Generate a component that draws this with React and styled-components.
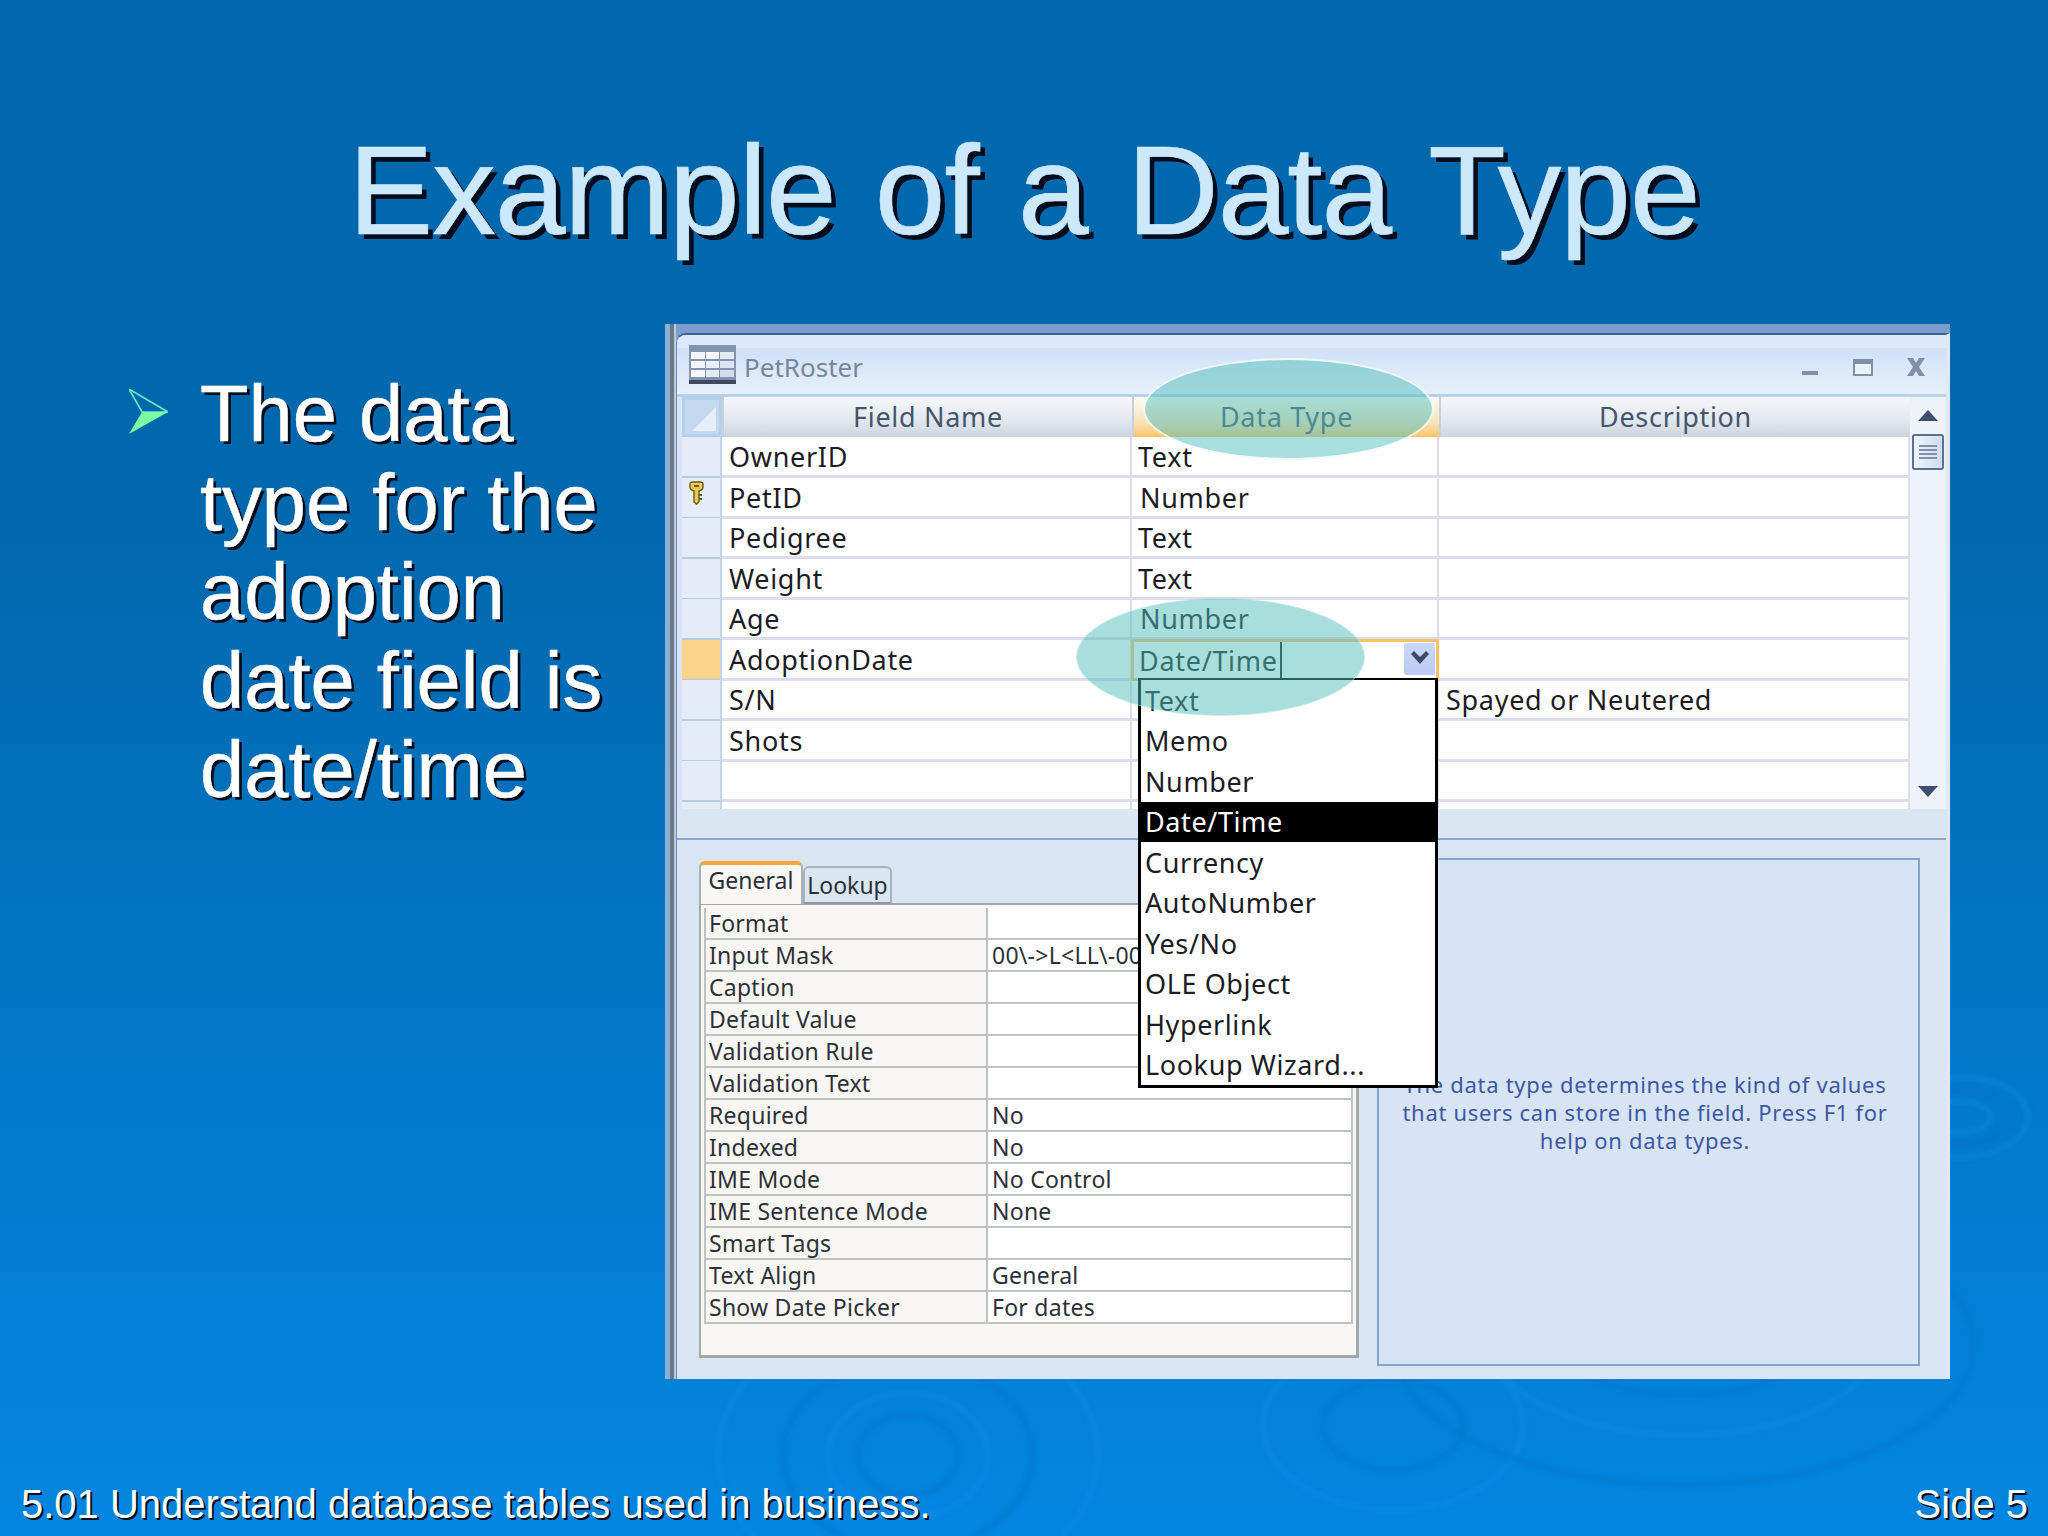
import React from "react";
import styled, { createGlobalStyle } from "styled-components";

const Global = createGlobalStyle`
  html, body { margin: 0; padding: 0; background: #0268ae; }
  * { box-sizing: border-box; }
`;

const Slide = styled.div`
  position: relative;
  width: 2048px;
  height: 1536px;
  overflow: hidden;
  display: flex;
  flex-direction: column;
  background: linear-gradient(180deg, #0268ae 0%, #0268ae 35%, #0276c6 65%, #0386e0 100%);
  font-family: "Liberation Sans", Arial, sans-serif;
`;

const Ripples = styled.svg`
  position: absolute;
  left: 0;
  top: 0;
  width: 2048px;
  height: 1536px;
  filter: blur(2px);
`;

const Title = styled.h1`
  position: relative;
  margin: 0;
  height: 324px;
  padding: 115px 0 0 0;
  font-size: 127px;
  font-weight: 400;
  line-height: 150px;
  text-align: center;
  color: #cce8fb;
  -webkit-text-stroke: 0.7px #cce8fb;
  text-shadow: 5px 5px 0 #010d1c;
  letter-spacing: -1px;
  word-spacing: 5px;
`;

const Main = styled.div`
  position: relative;
  display: flex;
  height: 1055px;
  padding-left: 129px;
`;

const BodyCol = styled.div`
  width: 536px;
  display: flex;
  gap: 32px;
  padding-top: 45px;
`;

const BulletIcon = styled.svg`
  flex: none;
  width: 39px;
  height: 45px;
  margin-top: 20px;
`;

const BodyText = styled.div`
  font-size: 79.5px;
  line-height: 89px;
  color: #fff;
  -webkit-text-stroke: 0.5px #fff;
  text-shadow: 3px 3px 0 #010d1c;
`;

const Win = styled.div`
  position: relative;
  width: 1285px;
  height: 1055px;
  padding: 9px 0 0 6px;
  background: linear-gradient(90deg, #6f7780 0 4px, #b4cce8 4px 6px) no-repeat left top / 6px 100%, #7a9ecb;
  border-left: 5px solid #8ab0d8;
  font-family: "Noto Sans", sans-serif;
`;

const WinInner = styled.div`
  height: 100%;
  display: flex;
  flex-direction: column;
  background: #d9e5f3;
  border-top: 2px solid #3e5f90;
  border-left: 1px solid #6f8fb8;
  border-right: 4px solid #dce8f5;
  border-top-left-radius: 10px;
  overflow: hidden;
`;

const TitleBar = styled.div`
  flex: none;
  height: 62px;
  display: flex;
  align-items: center;
  padding: 4px 19px 0 12px;
  border-bottom: 3px solid #b8d0ee;
  background: linear-gradient(180deg, #dbe9fb 0%, #dbe9fb 22%, #d0e1f6 23%, #e6f0fb 100%);
`;

const TableIcon = styled.svg`
  width: 47px;
  height: 39px;
  flex: none;
  margin-top: -4px;
`;

const WinName = styled.span`
  margin-left: 8px;
  font-size: 26px;
  color: #76879c;
  flex: 1;
`;

const WinBtn = styled.svg`
  width: 22px;
  height: 22px;
  margin-left: 31px;
`;

const GridWrap = styled.div`
  flex: none;
  display: flex;
  height: 412px;
  padding-left: 5px;
`;

const Grid = styled.div`
  width: 1228px;
  height: 412px;
  overflow: hidden;
  background: #fff;
`;

const HeaderRow = styled.div`
  display: grid;
  grid-template-columns: 40px 410px 307px 471px;
  height: 40px;
`;

const Corner = styled.div`
  background: #c4d8f0;
  border: 3px solid #b5cee9;
  display: flex;
  align-items: flex-end;
  justify-content: flex-end;
`;

const CornerMark = styled.div`
  width: 0;
  height: 0;
  border-style: solid;
  border-width: 0 0 24px 24px;
  border-color: transparent transparent #e6eef8 transparent;
  margin: 0 3px 3px 0;
`;

const HeadCell = styled.div`
  display: flex;
  align-items: center;
  justify-content: center;
  padding-bottom: 2px;
  font-size: 27px;
  letter-spacing: 0.7px;
  color: #45556c;
  border-left: 2px solid #c7d0dc;
  background: ${p => p.$active
    ? "linear-gradient(180deg, #fdfbf5 0%, #f8e2b6 65%, #fec468 100%)"
    : "linear-gradient(180deg, #f6f8fb 0%, #e2e7ee 60%, #cdd4de 100%)"};
`;

const Row = styled.div`
  display: grid;
  grid-template-columns: 40px 410px 307px 471px;
  height: 40.5px;
`;

const Selector = styled.div`
  position: relative;
  background: ${p => p.$active ? "#fdd38c" : "#e4ecf8"};
  border-bottom: 2px solid #b7cbe2;
  border-right: 2px solid #c4d5ea;
`;

const KeyIcon = styled.svg`
  position: absolute;
  left: 6px;
  top: 3px;
  width: 17px;
  height: 24px;
`;

const Cell = styled.div`
  position: relative;
  display: flex;
  align-items: center;
  padding-left: ${p => p.$pad || 7}px;
  padding-top: 1px;
  font-size: 27px;
  letter-spacing: 0.7px;
  color: #1c1c24;
  white-space: nowrap;
  border-bottom: 3px solid #dcdcec;
  border-right: 2px solid #dcdcec;
`;

const ActiveCell = styled(Cell)`
  border: 3px solid #fcc26a;
  margin-left: -1px;
  margin-top: -1px;
  height: 42px;
  width: 308px;
  z-index: 1;
  background: #fff;
  padding-left: 5px;
`;

const Caret = styled.span`
  display: inline-block;
  width: 2px;
  height: 36px;
  margin-left: 2px;
  background: #10202a;
`;

const DropBtn = styled.div`
  position: absolute;
  right: 1px;
  top: 1px;
  width: 31px;
  height: 32px;
  display: flex;
  align-items: center;
  justify-content: center;
  background: linear-gradient(180deg, #c9d6f7, #bccbf3);
  border-radius: 2px;
`;

const ScrollBar = styled.div`
  width: 36px;
  height: 412px;
  display: flex;
  flex-direction: column;
  align-items: center;
  padding: 13px 0 12px;
  background: #eef3fa;
`;

const ScrollThumb = styled.div`
  width: 32px;
  height: 36px;
  margin-top: 13px;
  margin-bottom: auto;
  border: 2px solid #5f6f8c;
  border-radius: 3px;
  background: linear-gradient(90deg, #eef3fb, #cfdcef);
  display: flex;
  flex-direction: column;
  align-items: center;
  justify-content: center;
  gap: 2px;
`;

const ThumbLine = styled.div`
  width: 18px;
  height: 2px;
  background: #7f90a8;
`;

const ArrowUp = styled.div`
  width: 0;
  height: 0;
  border-style: solid;
  border-width: ${p => p.$down ? "11px 10px 0 10px" : "0 10px 11px 10px"};
  border-color: ${p => p.$down ? "#3f4f70 transparent transparent transparent" : "transparent transparent #3f4f70 transparent"};
`;

const Spacer = styled.div`
  flex: none;
  height: 31px;
  background: #dbe6f3;
  border-bottom: 2px solid #8aa8cc;
`;

const Lower = styled.div`
  flex: 1;
  display: flex;
  gap: 18px;
  padding: 18px 0 13px 22px;
  background: #d9e5f3;
`;

const PropsCol = styled.div`
  width: 660px;
  margin-bottom: 8px;
  padding-top: 2px;
  display: flex;
  flex-direction: column;
`;

const Tabs = styled.div`
  flex: none;
  display: flex;
  align-items: flex-end;
  height: 43px;
  position: relative;
  top: 1px;
`;

const Tab = styled.div`
  display: flex;
  align-items: center;
  justify-content: center;
  font-size: 23px;
  color: #2a2f38;
  border-radius: 6px 6px 0 0;
  height: ${p => p.$on ? 43 : 38}px;
  width: ${p => p.$on ? 104 : 89}px;
  background: ${p => p.$on ? "#f8f7f3" : "#dbe6f3"};
  border: 2px solid #a9b1bb;
  border-top: ${p => p.$on ? "4px solid #f5a83c" : "2px solid #a9b1bb"};
  border-bottom: ${p => p.$on ? "none" : "2px solid #8f969f"};
  padding-bottom: ${p => p.$on ? 9 : 1}px;
`;

const Panel = styled.div`
  flex: 1;
  background: #f7f6f2;
  border: 2px solid #a5a8a8;
  border-right-width: 3px;
  border-bottom-width: 3px;
  padding: 3px 3px;
`;

const PropRow = styled.div`
  display: grid;
  grid-template-columns: 284px 1fr;
  grid-template-rows: 32px;
  height: 32px;
  font-size: 23px;
  line-height: 28px;
  letter-spacing: 0.25px;
  color: #2d3038;
`;

const PropLabel = styled.div`
  display: flex;
  align-items: center;
  padding-left: 3px;
  white-space: nowrap;
  background: #f7f6f2;
  border: 2px solid #bfc2c4;
  border-width: 0 2px 2px 2px;
`;

const PropValue = styled.div`
  display: flex;
  align-items: center;
  padding-left: 4px;
  white-space: nowrap;
  overflow: hidden;
  background: #fff;
  border: 2px solid #bfc2c4;
  border-width: 0 2px 2px 0;
`;

const HelpBox = styled.div`
  width: 543px;
  border: 2px solid #86a4cc;
  display: flex;
  align-items: center;
  justify-content: center;
  padding-right: 7px;
  text-align: center;
  font-size: 22px;
  line-height: 28px;
  letter-spacing: 0.7px;
  color: #3e56a4;
  background: #d6e4f3;
`;

const DropList = styled.div`
  position: absolute;
  left: 468px;
  top: 354px;
  width: 300px;
  height: 410px;
  background: #fff;
  border: 3px solid #000;
  border-width: 2px 3px 3px 3px;
  z-index: 2;
`;

const DropItem = styled.div`
  height: 40.5px;
  display: flex;
  align-items: center;
  padding-left: 4px;
  font-size: 27px;
  letter-spacing: 0.6px;
  color: ${p => p.$sel ? "#fff" : "#1c1c24"};
  background: ${p => p.$sel ? "#000" : "transparent"};
`;

const Highlight = styled.div`
  position: absolute;
  left: ${p => p.$x}px;
  top: ${p => p.$y}px;
  width: ${p => p.$w}px;
  height: ${p => p.$h}px;
  border-radius: 50%;
  background: rgba(82, 190, 185, 0.5);
  border: ${p => p.$line ? "2px solid rgba(255,255,255,0.85)" : "1px solid rgba(255,255,255,0.35)"};
  z-index: 3;
`;

const Footer = styled.div`
  position: relative;
  margin-top: auto;
  height: 64px;
  display: flex;
  justify-content: space-between;
  align-items: center;
  padding: 0 20px 0 21px;
  font-size: 40px;
  color: #fff;
  text-shadow: 2px 2px 0 #010d1c;
`;

const rows = [
  ["OwnerID", "Text", ""],
  ["PetID", "Number", ""],
  ["Pedigree", "Text", ""],
  ["Weight", "Text", ""],
  ["Age", "Number", ""],
  ["AdoptionDate", "Date/Time", ""],
  ["S/N", "", "Spayed or Neutered"],
  ["Shots", "", ""],
  ["", "", ""],
  ["", "", ""],
];

const types = ["Text", "Memo", "Number", "Date/Time", "Currency", "AutoNumber", "Yes/No", "OLE Object", "Hyperlink", "Lookup Wizard..."];

const props = [
  ["Format", ""],
  ["Input Mask", "00\\->L<LL\\-00"],
  ["Caption", ""],
  ["Default Value", ""],
  ["Validation Rule", ""],
  ["Validation Text", ""],
  ["Required", "No"],
  ["Indexed", "No"],
  ["IME Mode", "No Control"],
  ["IME Sentence Mode", "None"],
  ["Smart Tags", ""],
  ["Text Align", "General"],
  ["Show Date Picker", "For dates"],
];

const rings = [
  [908, 1455, 50, 40], [908, 1455, 80, 62], [908, 1455, 125, 95], [908, 1455, 190, 140],
  [1393, 1425, 70, 45], [1393, 1425, 130, 85],
  [1684, 1345, 120, 50], [1684, 1345, 190, 90], [1684, 1345, 290, 140],
  [1960, 1117, 30, 16], [1960, 1117, 50, 27], [1960, 1117, 68, 40],
];

export default function App() {
  return (
    <Slide>
      <Global />
      <Ripples viewBox="0 0 2048 1536" fill="none">
        {rings.map(([cx, cy, rx, ry], i) => (
          <ellipse key={i} cx={cx} cy={cy} rx={rx} ry={ry} stroke={i % 2 ? "#0f8ce6" : "#0373c4"} strokeOpacity="0.45" strokeWidth="5" />
        ))}
      </Ripples>
      <Title>Example of a Data Type</Title>
      <Main>
        <BodyCol>
          <BulletIcon viewBox="0 0 39 45">
            <path d="M0 0 L39 23 L13 23 Z" fill="none" stroke="#5ff0c8" strokeWidth="1.6" />
            <path d="M0 45 L13 23 L39 23 Z" fill="#7dfba0" />
          </BulletIcon>
          <BodyText>The data<br />type for the<br />adoption<br />date field is<br />date/time</BodyText>
        </BodyCol>
        <Win>
          <WinInner>
            <TitleBar>
              <TableIcon viewBox="0 0 47 39">
                <rect width="47" height="39" fill="#8494ae" />
                <rect x="2" y="7" width="14" height="7" fill="#f4f7fc" />
                <rect x="17" y="7" width="13" height="7" fill="#f4f7fc" />
                <rect x="31" y="7" width="14" height="7" fill="#e4ebf6" />
                <rect x="2" y="16" width="14" height="7" fill="#f4f7fc" />
                <rect x="17" y="16" width="13" height="7" fill="#eaf0f8" />
                <rect x="31" y="16" width="14" height="7" fill="#dbe4f2" />
                <rect x="2" y="25" width="14" height="7" fill="#f4f7fc" />
                <rect x="17" y="25" width="13" height="7" fill="#e4ebf6" />
                <rect x="31" y="25" width="14" height="7" fill="#d2dcee" />
                <rect y="35" width="47" height="4" fill="#404a5e" />
              </TableIcon>
              <WinName>PetRoster</WinName>
              <WinBtn viewBox="0 0 22 22">
                <rect x="3" y="15" width="16" height="4" fill="#7f8fa8" />
              </WinBtn>
              <WinBtn viewBox="0 0 22 22">
                <rect x="2" y="4" width="18" height="15" fill="#eaf2fb" stroke="#7f8fa8" strokeWidth="2" />
                <rect x="2" y="3" width="18" height="5" fill="#7f8fa8" />
              </WinBtn>
              <WinBtn viewBox="0 0 22 22">
                <path d="M2 2h6l3 5 3-5h6l-6 9 6 9h-6l-3-5-3 5H2l6-9z" fill="#7f90a8" />
              </WinBtn>
            </TitleBar>
            <GridWrap>
              <Grid>
                <HeaderRow>
                  <Corner><CornerMark /></Corner>
                  <HeadCell>Field Name</HeadCell>
                  <HeadCell $active>Data Type</HeadCell>
                  <HeadCell>Description</HeadCell>
                </HeaderRow>
                {rows.map((r, i) => (
                  <Row key={i}>
                    <Selector $active={i === 5}>
                      {i === 1 && (
                        <KeyIcon viewBox="0 0 17 24">
                          <path d="M2 3 Q2 1 5 1 H12 Q15 1 15 3 V6 Q15 9 11 10 V21 L8.5 23 L6 21 V10 Q2 9 2 6 Z" fill="#e6c95a" stroke="#6a5a10" strokeWidth="1.4" />
                          <rect x="6" y="4" width="5" height="2" fill="#6a5a10" />
                          <path d="M11 14h3M11 18h3" stroke="#6a5a10" strokeWidth="2" />
                        </KeyIcon>
                      )}
                    </Selector>
                    <Cell>{r[0]}</Cell>
                    {i === 5 ? (
                      <ActiveCell>
                        Date/Time<Caret />
                        <DropBtn>
                          <svg width="18" height="15" viewBox="0 0 18 15">
                            <path d="M0 3l3-3 6 6 6-6 3 3-9 10z" fill="#3a4a6a" />
                          </svg>
                        </DropBtn>
                      </ActiveCell>
                    ) : (
                      <Cell $pad={r[1] === "Number" ? 8 : 6}>{r[1]}</Cell>
                    )}
                    <Cell>{r[2]}</Cell>
                  </Row>
                ))}
              </Grid>
              <ScrollBar>
                <ArrowUp />
                <ScrollThumb>
                  <ThumbLine /><ThumbLine /><ThumbLine /><ThumbLine />
                </ScrollThumb>
                <ArrowUp $down />
              </ScrollBar>
            </GridWrap>
            <Spacer />
            <Lower>
              <PropsCol>
                <Tabs>
                  <Tab $on>General</Tab>
                  <Tab>Lookup</Tab>
                </Tabs>
                <Panel>
                  {props.map(([label, value], i) => (
                    <PropRow key={i}>
                      <PropLabel>{label}</PropLabel>
                      <PropValue>{value}</PropValue>
                    </PropRow>
                  ))}
                </Panel>
              </PropsCol>
              <HelpBox>
                <div>
                  The data type determines the kind of values<br />
                  that users can store in the field.  Press F1 for<br />
                  help on data types.
                </div>
              </HelpBox>
            </Lower>
          </WinInner>
          <DropList>
            {types.map(t => <DropItem key={t} $sel={t === "Date/Time"}>{t}</DropItem>)}
          </DropList>
          <Highlight $x={473} $y={34} $w={291} $h={102} $line />
          <Highlight $x={406} $y={274} $w={289} $h={118} />
        </Win>
      </Main>
      <Footer>
        <span>5.01 Understand database tables used in business.</span>
        <span>Side 5</span>
      </Footer>
    </Slide>
  );
}
